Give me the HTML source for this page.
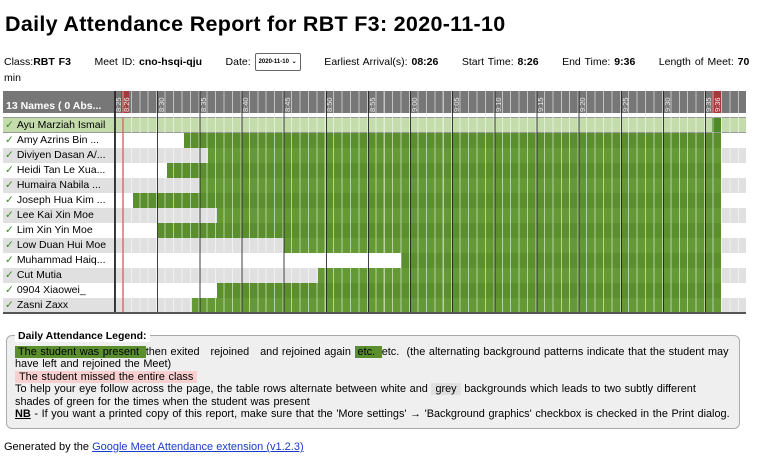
<!DOCTYPE html>
<html><head><meta charset="utf-8"><style>
body{margin:0;background:#fff;font-family:"Liberation Sans",sans-serif;color:#000;width:768px;height:466px;overflow:hidden;position:relative}
.a{position:absolute}
h1{position:absolute;left:5px;top:12px;margin:0;font-size:21.5px;font-weight:bold;letter-spacing:0.3px;white-space:nowrap}
.info{position:absolute;left:4px;top:53px;font-size:10.5px;line-height:14px;width:760px;word-spacing:1px}
.info b{font-weight:bold}
.sel{display:inline-block;border:1px solid #666;font-size:6px;font-weight:bold;padding:1px 3px;vertical-align:middle;border-radius:2px;margin-right:8px}
.hdr{left:3px;top:91px;width:743px;height:22px;background:#777}
.hdr .t{position:absolute;left:3px;top:9px;color:#fff;font-weight:bold;font-size:10.5px}
.lbl{position:absolute;color:#eee;font-size:7.5px;transform-origin:0 0;transform:rotate(-90deg);white-space:nowrap}
.row{position:absolute;left:3px;width:743px;height:15px}
.nm{position:absolute;left:2px;top:1px;font-size:10.5px;white-space:nowrap}
.nm i{color:#3a8a2a;font-style:normal;margin-right:3px}
.g{position:absolute;top:0;height:15px;background:#5b8f2e}
.gr{background:#e0e0e0}
.gr .g{background:#649935}
.lines{position:absolute;left:115px;top:91px;width:631px;height:222px;
background:repeating-linear-gradient(90deg,transparent 0 7.4px,rgba(255,255,255,.55) 7.4px 8.43px)}
.major{position:absolute;left:115px;top:91px;width:631px;height:222px;
background:repeating-linear-gradient(90deg,rgba(30,30,30,.85) 0 1px,transparent 1px 42.15px)}
.legend{left:6px;top:335px;width:732px;height:92px;border:1px solid #aaa;border-radius:6px;background:#efefef;font-size:10.9px;line-height:12.4px;word-spacing:0.6px}
.legend .ttl{position:absolute;left:8px;top:-6px;background:#fff;font-weight:bold;font-size:10.5px;padding:0 3px;word-spacing:0}
</style></head><body>
<h1>Daily Attendance Report for RBT F3: 2020-11-10</h1>
<div class="info">Class:<b>RBT F3</b> &nbsp;&nbsp;&nbsp;&nbsp; Meet ID: <b>cno-hsqi-qju</b> &nbsp;&nbsp;&nbsp;&nbsp; Date: <span class="sel">2020-11-10 ⌄</span> &nbsp;&nbsp; Earliest Arrival(s): <b>08:26</b> &nbsp;&nbsp;&nbsp;&nbsp; Start Time: <b>8:26</b> &nbsp;&nbsp;&nbsp;&nbsp; End Time: <b>9:36</b> &nbsp;&nbsp;&nbsp;&nbsp; Length of Meet: <b>70</b><br>min</div>

<div class="a hdr"><span class="t">13 Names ( 0 Abs...</span></div>
<div class="a" style="left:121px;top:91px;width:8px;height:22px;background:#a33a3a"></div>
<div class="a" style="left:712px;top:91px;width:9px;height:22px;background:#a33a3a"></div>
<div class="a" style="left:0;top:113px;width:768px;height:4px;background:#fff"></div>

<div class="lbl" style="left:114px;top:112px">8:25</div>
<div class="lbl" style="left:122px;top:112px">8:26</div>
<div class="lbl" style="left:157px;top:112px">8:30</div>
<div class="lbl" style="left:199px;top:112px">8:35</div>
<div class="lbl" style="left:241px;top:112px">8:40</div>
<div class="lbl" style="left:283px;top:112px">8:45</div>
<div class="lbl" style="left:325px;top:112px">8:50</div>
<div class="lbl" style="left:368px;top:112px">8:55</div>
<div class="lbl" style="left:410px;top:112px">9:00</div>
<div class="lbl" style="left:452px;top:112px">9:05</div>
<div class="lbl" style="left:494px;top:112px">9:10</div>
<div class="lbl" style="left:536px;top:112px">9:15</div>
<div class="lbl" style="left:578px;top:112px">9:20</div>
<div class="lbl" style="left:621px;top:112px">9:25</div>
<div class="lbl" style="left:663px;top:112px">9:30</div>
<div class="lbl" style="left:704px;top:112px">9:35</div>
<div class="lbl" style="left:713px;top:112px">9:36</div>

<div class="row" style="top:117px;height:16px;background:#c4dbac;border-top:1px solid #999;border-bottom:1px solid #999;box-sizing:border-box"><span class="nm" style="top:1px"><i>✓</i>Ayu Marziah Ismail</span><div class="g" style="left:709px;width:9px;height:14px;background:#4e8a28"></div></div>
<div class="row" style="top:133px"><span class="nm"><i>✓</i>Amy Azrins Bin ...</span><div class="g" style="left:181px;width:537px"></div></div>
<div class="row gr" style="top:148px"><span class="nm"><i>✓</i>Diviyen Dasan A/...</span><div class="g" style="left:205px;width:513px"></div></div>
<div class="row" style="top:163px"><span class="nm"><i>✓</i>Heidi Tan Le Xua...</span><div class="g" style="left:164px;width:554px"></div></div>
<div class="row gr" style="top:178px"><span class="nm"><i>✓</i>Humaira Nabila ...</span><div class="g" style="left:197px;width:521px"></div></div>
<div class="row" style="top:193px"><span class="nm"><i>✓</i>Joseph Hua Kim ...</span><div class="g" style="left:130px;width:588px"></div></div>
<div class="row gr" style="top:208px"><span class="nm"><i>✓</i>Lee Kai Xin Moe</span><div class="g" style="left:214px;width:504px"></div></div>
<div class="row" style="top:223px"><span class="nm"><i>✓</i>Lim Xin Yin Moe</span><div class="g" style="left:155px;width:563px"></div></div>
<div class="row gr" style="top:238px"><span class="nm"><i>✓</i>Low Duan Hui Moe</span><div class="g" style="left:281px;width:437px"></div></div>
<div class="row" style="top:253px"><span class="nm"><i>✓</i>Muhammad Haiq...</span><div class="g" style="left:398px;width:320px"></div></div>
<div class="row gr" style="top:268px"><span class="nm"><i>✓</i>Cut Mutia</span><div class="g" style="left:315px;width:403px"></div></div>
<div class="row" style="top:283px"><span class="nm"><i>✓</i>0904 Xiaowei_</span><div class="g" style="left:214px;width:504px"></div></div>
<div class="row gr" style="top:298px"><span class="nm"><i>✓</i>Zasni Zaxx</span><div class="g" style="left:189px;width:529px"></div></div>

<div class="lines"></div>
<div class="major"></div>
<div class="a" style="left:114px;top:91px;width:1px;height:222px;background:#333"></div>
<div class="a" style="left:122px;top:117px;width:2px;height:196px;background:rgba(200,80,80,.6)"></div>
<div class="a" style="left:3px;top:312px;width:743px;height:2px;background:#555"></div>

<div class="a legend"><span class="ttl">Daily Attendance Legend:</span>
<div class="a" style="left:8px;top:10px;width:724px">
<span style="background:#5b8f2e;padding:0 3px">The student was present </span> then exited &nbsp; rejoined &nbsp; and rejoined again <span style="background:#5b8f2e;padding:0 3px">etc. </span> etc. &nbsp;(the alternating background patterns indicate that the student may<br>have left and rejoined the Meet)<br>
<span style="background:#f8d0d0;padding:0 4px">The student missed the entire class</span><br>
To help your eye follow across the page, the table rows alternate between white and <span style="background:#e0e0e0;padding:0 4px">grey</span> backgrounds which leads to two subtly different<br>shades of green for the times when the student was present<br>
<b style="text-decoration:underline">NB</b> - If you want a printed copy of this report, make sure that the 'More settings' → 'Background graphics' checkbox is checked in the Print dialog.</div></div>

<div class="a" style="left:4px;top:441px;font-size:11px">Generated by the <span style="color:#1a3ccc;text-decoration:underline">Google Meet Attendance extension (v1.2.3)</span></div>
</body></html>
